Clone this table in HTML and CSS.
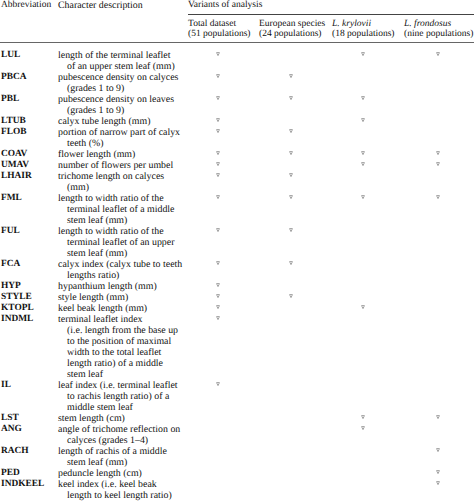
FILE: index.html
```html
<!DOCTYPE html>
<html>
<head>
<meta charset="utf-8">
<link rel="stylesheet" href="styles.css">
</head>
<body>
<div class="table">
  <div class="row head1">
    <div class="abbr-h">Abbreviation</div>
    <div class="desc-h">Character description</div>
    <div class="variants">Variants of analysis</div>
  </div>
  <div class="row head2">
    <div></div>
    <div></div>
    <div class="colh">Total dataset<br>(51 populations)</div>
    <div class="colh">European species<br>(24 populations)</div>
    <div class="colh"><i>L. krylovii</i><br>(18 populations)</div>
    <div class="colh"><i>L. frondosus</i><br>(nine populations)</div>
  </div>
  <div class="tbody">
    <div class="row"><div class="abbr">LUL</div><div class="desc">length of the terminal leaflet<br>of an upper stem leaf (mm)</div><div class="t c1"><svg class="tick" viewBox="0 0 4 4"><path d="M0.3 0.6H3.7M0.8 1.2L2 3.6L3.2 1.2"/></svg></div><div class="t c2"></div><div class="t c3"><svg class="tick" viewBox="0 0 4 4"><path d="M0.3 0.6H3.7M0.8 1.2L2 3.6L3.2 1.2"/></svg></div><div class="t c4"><svg class="tick" viewBox="0 0 4 4"><path d="M0.3 0.6H3.7M0.8 1.2L2 3.6L3.2 1.2"/></svg></div></div>
    <div class="row"><div class="abbr">PBCA</div><div class="desc">pubescence density on calyces<br>(grades 1 to 9)</div><div class="t c1"><svg class="tick" viewBox="0 0 4 4"><path d="M0.3 0.6H3.7M0.8 1.2L2 3.6L3.2 1.2"/></svg></div><div class="t c2"><svg class="tick" viewBox="0 0 4 4"><path d="M0.3 0.6H3.7M0.8 1.2L2 3.6L3.2 1.2"/></svg></div><div class="t c3"></div><div class="t c4"></div></div>
    <div class="row"><div class="abbr">PBL</div><div class="desc">pubescence density on leaves<br>(grades 1 to 9)</div><div class="t c1"><svg class="tick" viewBox="0 0 4 4"><path d="M0.3 0.6H3.7M0.8 1.2L2 3.6L3.2 1.2"/></svg></div><div class="t c2"><svg class="tick" viewBox="0 0 4 4"><path d="M0.3 0.6H3.7M0.8 1.2L2 3.6L3.2 1.2"/></svg></div><div class="t c3"><svg class="tick" viewBox="0 0 4 4"><path d="M0.3 0.6H3.7M0.8 1.2L2 3.6L3.2 1.2"/></svg></div><div class="t c4"></div></div>
    <div class="row"><div class="abbr">LTUB</div><div class="desc">calyx tube length (mm)</div><div class="t c1"><svg class="tick" viewBox="0 0 4 4"><path d="M0.3 0.6H3.7M0.8 1.2L2 3.6L3.2 1.2"/></svg></div><div class="t c2"></div><div class="t c3"><svg class="tick" viewBox="0 0 4 4"><path d="M0.3 0.6H3.7M0.8 1.2L2 3.6L3.2 1.2"/></svg></div><div class="t c4"></div></div>
    <div class="row"><div class="abbr">FLOB</div><div class="desc">portion of narrow part of calyx<br>teeth (%)</div><div class="t c1"><svg class="tick" viewBox="0 0 4 4"><path d="M0.3 0.6H3.7M0.8 1.2L2 3.6L3.2 1.2"/></svg></div><div class="t c2"><svg class="tick" viewBox="0 0 4 4"><path d="M0.3 0.6H3.7M0.8 1.2L2 3.6L3.2 1.2"/></svg></div><div class="t c3"></div><div class="t c4"></div></div>
    <div class="row"><div class="abbr">COAV</div><div class="desc">flower length (mm)</div><div class="t c1"><svg class="tick" viewBox="0 0 4 4"><path d="M0.3 0.6H3.7M0.8 1.2L2 3.6L3.2 1.2"/></svg></div><div class="t c2"><svg class="tick" viewBox="0 0 4 4"><path d="M0.3 0.6H3.7M0.8 1.2L2 3.6L3.2 1.2"/></svg></div><div class="t c3"><svg class="tick" viewBox="0 0 4 4"><path d="M0.3 0.6H3.7M0.8 1.2L2 3.6L3.2 1.2"/></svg></div><div class="t c4"><svg class="tick" viewBox="0 0 4 4"><path d="M0.3 0.6H3.7M0.8 1.2L2 3.6L3.2 1.2"/></svg></div></div>
    <div class="row"><div class="abbr">UMAV</div><div class="desc">number of flowers per umbel</div><div class="t c1"><svg class="tick" viewBox="0 0 4 4"><path d="M0.3 0.6H3.7M0.8 1.2L2 3.6L3.2 1.2"/></svg></div><div class="t c2"></div><div class="t c3"><svg class="tick" viewBox="0 0 4 4"><path d="M0.3 0.6H3.7M0.8 1.2L2 3.6L3.2 1.2"/></svg></div><div class="t c4"><svg class="tick" viewBox="0 0 4 4"><path d="M0.3 0.6H3.7M0.8 1.2L2 3.6L3.2 1.2"/></svg></div></div>
    <div class="row"><div class="abbr">LHAIR</div><div class="desc">trichome length on calyces<br>(mm)</div><div class="t c1"><svg class="tick" viewBox="0 0 4 4"><path d="M0.3 0.6H3.7M0.8 1.2L2 3.6L3.2 1.2"/></svg></div><div class="t c2"><svg class="tick" viewBox="0 0 4 4"><path d="M0.3 0.6H3.7M0.8 1.2L2 3.6L3.2 1.2"/></svg></div><div class="t c3"></div><div class="t c4"></div></div>
    <div class="row"><div class="abbr">FML</div><div class="desc">length to width ratio of the<br>terminal leaflet of a middle<br>stem leaf (mm)</div><div class="t c1"><svg class="tick" viewBox="0 0 4 4"><path d="M0.3 0.6H3.7M0.8 1.2L2 3.6L3.2 1.2"/></svg></div><div class="t c2"><svg class="tick" viewBox="0 0 4 4"><path d="M0.3 0.6H3.7M0.8 1.2L2 3.6L3.2 1.2"/></svg></div><div class="t c3"><svg class="tick" viewBox="0 0 4 4"><path d="M0.3 0.6H3.7M0.8 1.2L2 3.6L3.2 1.2"/></svg></div><div class="t c4"><svg class="tick" viewBox="0 0 4 4"><path d="M0.3 0.6H3.7M0.8 1.2L2 3.6L3.2 1.2"/></svg></div></div>
    <div class="row"><div class="abbr">FUL</div><div class="desc">length to width ratio of the<br>terminal leaflet of an upper<br>stem leaf (mm)</div><div class="t c1"><svg class="tick" viewBox="0 0 4 4"><path d="M0.3 0.6H3.7M0.8 1.2L2 3.6L3.2 1.2"/></svg></div><div class="t c2"><svg class="tick" viewBox="0 0 4 4"><path d="M0.3 0.6H3.7M0.8 1.2L2 3.6L3.2 1.2"/></svg></div><div class="t c3"></div><div class="t c4"></div></div>
    <div class="row"><div class="abbr">FCA</div><div class="desc">calyx index (calyx tube to teeth<br>lengths ratio)</div><div class="t c1"><svg class="tick" viewBox="0 0 4 4"><path d="M0.3 0.6H3.7M0.8 1.2L2 3.6L3.2 1.2"/></svg></div><div class="t c2"><svg class="tick" viewBox="0 0 4 4"><path d="M0.3 0.6H3.7M0.8 1.2L2 3.6L3.2 1.2"/></svg></div><div class="t c3"></div><div class="t c4"></div></div>
    <div class="row"><div class="abbr">HYP</div><div class="desc">hypanthium length (mm)</div><div class="t c1"><svg class="tick" viewBox="0 0 4 4"><path d="M0.3 0.6H3.7M0.8 1.2L2 3.6L3.2 1.2"/></svg></div><div class="t c2"></div><div class="t c3"></div><div class="t c4"></div></div>
    <div class="row"><div class="abbr">STYLE</div><div class="desc">style length (mm)</div><div class="t c1"><svg class="tick" viewBox="0 0 4 4"><path d="M0.3 0.6H3.7M0.8 1.2L2 3.6L3.2 1.2"/></svg></div><div class="t c2"><svg class="tick" viewBox="0 0 4 4"><path d="M0.3 0.6H3.7M0.8 1.2L2 3.6L3.2 1.2"/></svg></div><div class="t c3"></div><div class="t c4"></div></div>
    <div class="row"><div class="abbr">KTOPL</div><div class="desc">keel beak length (mm)</div><div class="t c1"><svg class="tick" viewBox="0 0 4 4"><path d="M0.3 0.6H3.7M0.8 1.2L2 3.6L3.2 1.2"/></svg></div><div class="t c2"></div><div class="t c3"><svg class="tick" viewBox="0 0 4 4"><path d="M0.3 0.6H3.7M0.8 1.2L2 3.6L3.2 1.2"/></svg></div><div class="t c4"></div></div>
    <div class="row"><div class="abbr">INDML</div><div class="desc">terminal leaflet index<br>(i.e. length from the base up<br>to the position of maximal<br>width to the total leaflet<br>length ratio) of a middle<br>stem leaf</div><div class="t c1"><svg class="tick" viewBox="0 0 4 4"><path d="M0.3 0.6H3.7M0.8 1.2L2 3.6L3.2 1.2"/></svg></div><div class="t c2"></div><div class="t c3"></div><div class="t c4"></div></div>
    <div class="row"><div class="abbr">IL</div><div class="desc">leaf index (i.e. terminal leaflet<br>to rachis length ratio) of a<br>middle stem leaf</div><div class="t c1"><svg class="tick" viewBox="0 0 4 4"><path d="M0.3 0.6H3.7M0.8 1.2L2 3.6L3.2 1.2"/></svg></div><div class="t c2"></div><div class="t c3"></div><div class="t c4"></div></div>
    <div class="row"><div class="abbr">LST</div><div class="desc">stem length (cm)</div><div class="t c1"></div><div class="t c2"></div><div class="t c3"><svg class="tick" viewBox="0 0 4 4"><path d="M0.3 0.6H3.7M0.8 1.2L2 3.6L3.2 1.2"/></svg></div><div class="t c4"><svg class="tick" viewBox="0 0 4 4"><path d="M0.3 0.6H3.7M0.8 1.2L2 3.6L3.2 1.2"/></svg></div></div>
    <div class="row"><div class="abbr">ANG</div><div class="desc">angle of trichome reflection on<br>calyces (grades 1–4)</div><div class="t c1"></div><div class="t c2"></div><div class="t c3"><svg class="tick" viewBox="0 0 4 4"><path d="M0.3 0.6H3.7M0.8 1.2L2 3.6L3.2 1.2"/></svg></div><div class="t c4"></div></div>
    <div class="row"><div class="abbr">RACH</div><div class="desc">length of rachis of a middle<br>stem leaf (mm)</div><div class="t c1"></div><div class="t c2"></div><div class="t c3"></div><div class="t c4"><svg class="tick" viewBox="0 0 4 4"><path d="M0.3 0.6H3.7M0.8 1.2L2 3.6L3.2 1.2"/></svg></div></div>
    <div class="row"><div class="abbr">PED</div><div class="desc">peduncle length (cm)</div><div class="t c1"></div><div class="t c2"></div><div class="t c3"></div><div class="t c4"><svg class="tick" viewBox="0 0 4 4"><path d="M0.3 0.6H3.7M0.8 1.2L2 3.6L3.2 1.2"/></svg></div></div>
    <div class="row"><div class="abbr">INDKEEL</div><div class="desc">keel index (i.e. keel beak<br>length to keel length ratio)</div><div class="t c1"></div><div class="t c2"></div><div class="t c3"></div><div class="t c4"><svg class="tick" viewBox="0 0 4 4"><path d="M0.3 0.6H3.7M0.8 1.2L2 3.6L3.2 1.2"/></svg></div></div>
  </div>
</div>
</body>
</html>
```

FILE: styles.css
```css
html, body {
  margin: 0;
  padding: 0;
  background: #ffffff;
  overflow: hidden;
}

.table {
  font-family: "Liberation Serif", "Times New Roman", serif;
  font-size: 9.9px;
  line-height: 11px;
  color: #111;
  width: 474px;
  text-rendering: geometricPrecision;
}

.row {
  display: grid;
  grid-template-columns: 58px 130px 71px 73px 72px 70px;
  white-space: nowrap;
}

.head1,
.head2 {
  font-size: 9.5px;
}

.head1 .abbr-h {
  padding-left: 1px;
}

.head1 .desc-h {
  font-size: 9.9px;
}

.head1 .variants {
  grid-column: 3 / 7;
  padding-bottom: 3px;
  border-bottom: 1.5px solid #444;
}

.head2 {
  padding-top: 5px;
  padding-bottom: 3px;
  border-bottom: 1.5px solid #666;
  line-height: 9.5px;
}

.tbody {
  padding-top: 7px;
}

.abbr {
  font-weight: bold;
  font-size: 9.4px;
  padding-left: 1px;
}

.desc {
  padding-left: 9px;
  text-indent: -9px;
}

.t {
  display: flex;
  align-items: flex-start;
}

.c1 { padding-left: 28px; }
.c2 { padding-left: 30px; }
.c3 { padding-left: 29px; }
.c4 { padding-left: 32px; }

.tick {
  width: 4px;
  height: 4px;
  margin-top: 2px;
  fill: none;
  stroke: #888;
  stroke-width: 0.8;
}
```
